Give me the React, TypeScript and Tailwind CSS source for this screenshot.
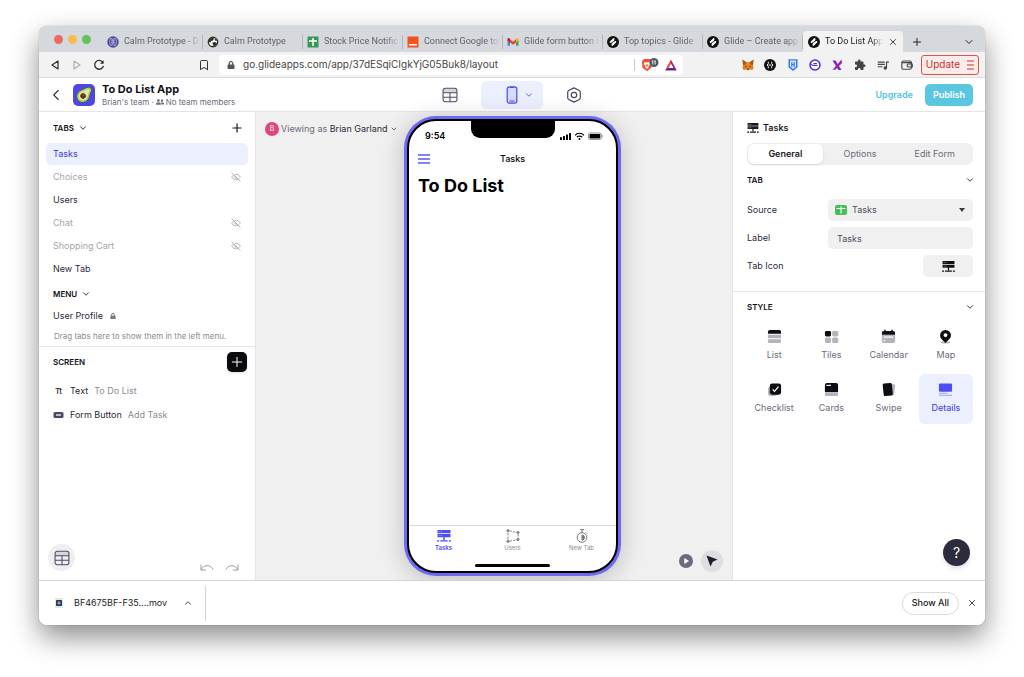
import React, { useState } from "react";
import { Bookmark, ChevronDown, ChevronLeft, ChevronUp, EyeOff, Plus, X } from "lucide-react";
import { FaLock, FaUserFriends } from "react-icons/fa";
import { MdExtension, MdQueueMusic } from "react-icons/md";

interface IconProps {
  className?: string;
}

/* ---------- favicons ---------- */

const GlideLogo = () => (
  <svg viewBox="0 0 24 24" className="size-3 shrink-0">
    <circle cx="12" cy="12" r="12" fill="#111" />
    <path d="M12.500 4.500 5.800 11.200a1.600 1.600 0 0 0 1.100 2.700H10l4.800-5.200V5.500c0-1.300-1.400-1.900-2.300-1z" fill="#fff" />
    <path d="m11.500 19.500 6.700-6.700a1.600 1.600 0 0 0-1.100-2.700H14l-4.800 5.200v3.200c0 1.300 1.400 1.900 2.300 1z" fill="#fff" />
    <path d="m8 14.500 8-5" stroke="#111" strokeWidth="1.500" />
  </svg>
);

const CalmLogo = () => (
  <svg viewBox="0 0 24 24" className="size-3 shrink-0">
    <circle cx="12" cy="12" r="11.500" fill="#4c4a94" />
    <path d="M6 5h4v14H7c-2-3-2-10-1-14zM14 5h4c1 4 1 11-1 14h-3z" fill="none" stroke="#b9aee0" strokeWidth="1.600" />
    <path d="M9 9h6M9 13h6M12 5v14" stroke="#b9aee0" strokeWidth="1.300" />
  </svg>
);

const GlobeLogo = () => (
  <svg viewBox="0 0 24 24" className="size-3 shrink-0">
    <circle cx="12" cy="12" r="9.500" fill="#f4f4f4" stroke="#333" strokeWidth="2.600" />
    <path d="M3 10c1-4 4-7 8-7l3 2-2 4-4 1-1 3-4-1zM11 13l5-1 4 2c0 3-3 6-6 7l-2-3zM15 5l4 2 1 3-4-1z" fill="#333" />
  </svg>
);

const SheetLogo = () => (
  <svg viewBox="0 0 24 24" className="size-3 shrink-0">
    <rect x="1" y="1" width="22" height="22" rx="1" fill="#34985a" />
    <path d="M12 4v16M4 10h16" stroke="#fff" strokeWidth="3" />
  </svg>
);

const ZapierLogo = () => (
  <svg viewBox="0 0 24 24" className="size-3 shrink-0">
    <rect x="1" y="1" width="22" height="22" fill="#f4511e" />
    <path d="M4 16h16v3H4z" fill="#fff" />
  </svg>
);

const GmailLogo = () => (
  <svg viewBox="0 0 24 24" className="size-3 shrink-0">
    <path d="M1 7v12.500h5V10z" fill="#4285f4" />
    <path d="M18 10v9.500h5V7z" fill="#34a853" />
    <path d="m6 6.500 6 5 6-5V13l-6 4.700L6 13z" fill="#ea4335" />
    <path d="M1 7c0-3 2.500-3.500 4.200-2.200L6 5.500V13L1 9z" fill="#c5221f" />
    <path d="M23 7c0-3-2.500-3.500-4.200-2.200l-.8.700V13l5-4z" fill="#fbbc04" />
  </svg>
);

/* ---------- toolbar icons ---------- */

const BackIcon = ({ className }: IconProps) => (
  <svg viewBox="0 0 12 12" className={className} fill="none" stroke="currentColor" strokeWidth="1.200" strokeLinejoin="round">
    <path d="M9 2v8L3 6z" />
  </svg>
);

const ReloadIcon = () => (
  <svg viewBox="0 0 12 12" className="size-3" fill="none" stroke="#2b2b2b" strokeWidth="1.300">
    <path d="M9.800 3.400A4.400 4.400 0 1 0 10.400 6.800" />
    <path d="M10.600 1.200v3.600H7z" fill="#2b2b2b" stroke="none" />
  </svg>
);

const BraveIcon = () => (
  <svg viewBox="0 0 18 14" className="h-[14px] w-[18px]">
    <path d="M3 1h6l2 2-.4 6.500L6 13.300 1.400 9.500 1 3z" fill="#f0512a" />
    <path d="M3.600 4 6 4.600 8.400 4l.9 2-1.800 2 .2 1.300L6 11 4.300 9.300 4.500 8l-1.800-2z" fill="#fff" />
    <path d="M4.600 6.500h2.800L6 9z" fill="#f0512a" />
    <circle cx="13" cy="4.500" r="4.500" fill="#4d5964" />
    <path d="m10.800 3.400 1-.7v3.800M13.200 3.400l1-.7v3.800" stroke="#fff" strokeWidth=".9" fill="none" />
  </svg>
);

const BatIcon = () => (
  <svg viewBox="0 0 12 12" className="size-3">
    <path d="M6 .8.300 11.200h11.400z" fill="#8a2a86" />
    <path d="M6 .8.300 11.200 3 9.500 6 4.500z" fill="#ff4724" />
    <path d="M6 4.600 3.400 9.300h5.200z" fill="#fff" />
    <path d="M.3 11.200h11.400L8.600 9.300H3.400z" fill="#5a1f8a" />
  </svg>
);

const FoxIcon = () => (
  <svg viewBox="0 0 12 12" className="size-3">
    <path d="m.5.800 4 2.400h3l4-2.400L11 6l.6 3-1.200 2-2.600-.6-1 .8H5.200l-1-.8-2.600.6L.4 9 1 6z" fill="#e8821e" />
    <path d="M.5.800 4.500 3.200 3 5.800 1 6zM11.500.800l-4 2.400L9 5.800l2 .2z" fill="#a9541b" />
    <path d="M3 6.600 5 8l-1.500.300zM9 6.600 7 8l1.500.300zM5 9.600h2l-.4 1H5.400z" fill="#2b2b3a" />
  </svg>
);

const HoneyIcon = () => (
  <svg viewBox="0 0 12 12" className="size-3">
    <circle cx="6" cy="6" r="6" fill="#111" />
    <path d="M4.300 2.700v2L3 6l1.300 1.300v2M7.700 2.700v2L9 6 7.700 7.300v2M4.500 6h3" stroke="#e8e8e8" strokeWidth="1" fill="none" />
  </svg>
);

const ShieldIcon = () => (
  <svg viewBox="0 0 12 12" className="size-3">
    <path d="M1.500.300h9v8L6 11.900 1.500 8.300z" fill="#2f7cf0" />
    <path d="M3 1.600h6v5.800L6 9.900 3 7.400z" fill="#dceafe" />
    <path d="M4.800 3v5M7.200 3v5M4.800 5.500h2.400" stroke="#2f7cf0" strokeWidth="1.200" />
  </svg>
);

const PocketIcon = () => (
  <svg viewBox="0 0 12 12" className="size-3">
    <circle cx="6" cy="6" r="5" fill="#fff" stroke="#4a2fd8" strokeWidth="1.500" />
    <path d="M1 4.500c1.500 1.800 2.500 2 4 2h3.500M4.500 4.600h3.300" stroke="#4a2fd8" strokeWidth="1.100" fill="none" />
  </svg>
);

const XenonIcon = () => (
  <svg viewBox="0 0 12 12" className="size-3">
    <path d="M1.500 1.500h3l6 9.500h-3z" fill="#6d28d9" />
    <path d="M10.500.500 6.800 5 5.500 6.200 1.500 11l3-.6L11 4z" fill="#a21caf" />
  </svg>
);

const WalletIcon = () => (
  <svg viewBox="0 0 12 12" className="size-3" fill="none" stroke="#444" strokeWidth="1.100">
    <rect x=".8" y="2" width="9.600" height="8.200" rx="1.500" />
    <path d="M1 3.600h9.400M11.300 5H7.500a1.400 1.400 0 0 0 0 3h3.800z" />
  </svg>
);

/* ---------- app icons ---------- */

const AvocadoIcon = () => (
  <svg viewBox="0 0 22 22" className="size-[22px]">
    <rect width="22" height="22" rx="5" fill="#4f46e5" />
    <g transform="rotate(42 11 11)">
      <path d="M11 1c2.800 0 3.500 2.800 4.200 5 .7 2.200 2.300 3.500 2.300 6.300a6.500 7 0 0 1-13 0c0-2.800 1.600-4.100 2.300-6.300C7.500 3.800 8.200 1 11 1z" fill="#3f6b2a" />
      <path d="M11 1.700c2.300 0 2.900 2.400 3.600 4.600.7 2.200 2.200 3.500 2.200 6a5.800 6.300 0 0 1-11.600 0c0-2.500 1.500-3.800 2.200-6C8.100 4.100 8.700 1.700 11 1.700z" fill="#a9cc5e" />
      <path d="M11 3.300c1.400 0 1.900 2.100 2.500 3.900.6 1.800 1.900 3 1.900 5.100a4.400 4.800 0 0 1-8.800 0c0-2.100 1.300-3.300 1.900-5.100.6-1.800 1.100-3.900 2.500-3.900z" fill="#dfe9a4" />
      <circle cx="11" cy="12.300" r="2.800" fill="#6b2f1a" />
      <circle cx="10.500" cy="11.500" r="1" fill="#934a2c" />
    </g>
  </svg>
);

const TableIcon = ({ className }: IconProps) => (
  <svg viewBox="0 0 18 18" className={className} fill="none" stroke="#4b4b60" strokeWidth="1.200">
    <path d="M1.500 2h15v4.500h-15z" fill="#d6d6dd" stroke="none" />
    <rect x="1.200" y="1.500" width="15.600" height="15" rx="2.500" />
    <path d="M1.200 6.500h15.600M1.200 11.500h15.600M9 6.500v10" />
  </svg>
);

const PhoneIcon = () => (
  <svg viewBox="0 0 12 18" className="h-[18px] w-3" fill="none" stroke="#4f46e5" strokeWidth="1.200">
    <rect x="1.200" y=".8" width="9.600" height="16.400" rx="2.200" fill="#d5dbfd" />
    <path d="M3.500 15h5M4 1.500h4" />
  </svg>
);

const SettingsIcon = () => (
  <svg viewBox="0 0 16 16" className="size-4" fill="none" stroke="#4b4b60" strokeWidth="1.200" strokeLinejoin="round">
    <path d="m8 .9 5.400 2.600.9 1.400v6.200l-.9 1.400L8 15.100l-5.400-2.600-.9-1.400V4.900l.9-1.400z" />
    <circle cx="8" cy="8" r="2.700" />
  </svg>
);

const RackIcon = ({ className }: IconProps) => (
  <svg viewBox="0 0 14 12" className={className} fill="currentColor">
    <path d="M.5 0h13v3.300H.5zM.5 4h13v3.300H.5zM6.300 7.300h1.400V10H6.300zM0 10.300h2.200v1.300H0zM3.300 10.300h7.400v1.300H3.300zM11.800 10.300H14v1.300h-2.200z" />
    <path d="M1.800 1.700h1M3.800 1.700h1M1.800 5.700h1M3.800 5.700h1" stroke="#fff" strokeWidth=".7" opacity=".8" />
  </svg>
);

const NodesIcon = () => (
  <svg viewBox="0 0 14 14" className="size-[14px]" fill="#8b8b92" stroke="#8b8b92">
    <path d="M2 4v6M3.500 1.800 11 3.500M3.500 12.200l7.500-1.500M12.200 5v4" strokeWidth="1" strokeDasharray="2.500 1" fill="none" />
    <circle cx="2" cy="1.800" r="1.200" />
    <circle cx="12" cy="3.500" r="1.200" />
    <circle cx="2" cy="12.200" r="1.200" />
    <circle cx="12" cy="10.500" r="1.200" />
  </svg>
);

const StopwatchIcon = () => (
  <svg viewBox="0 0 12 14" className="h-[14px] w-3" fill="none" stroke="#77777f" strokeWidth="1">
    <circle cx="6" cy="8.500" r="4.800" />
    <path d="M6 6v5a2.500 2.500 0 0 0 0-5z" fill="#77777f" />
    <path d="M4 .6h4M6 .6v3M10 3.500l1 1" />
  </svg>
);

const SignalIcons = () => (
  <svg viewBox="0 0 44 8" className="h-2 w-11" fill="#000">
    <rect x="0" y="5" width="2" height="3" rx=".5" />
    <rect x="3" y="4" width="2" height="4" rx=".5" />
    <rect x="6" y="2.500" width="2" height="5.500" rx=".5" />
    <rect x="9" y="1" width="2" height="7" rx=".5" />
    <path d="M15 3.300a6 6 0 0 1 9 0M16.800 5.200a3.700 3.700 0 0 1 5.400 0" fill="none" stroke="#000" strokeWidth="1.200" />
    <circle cx="19.500" cy="6.900" r="1" />
    <rect x="28.400" y="1" width="13" height="6.600" rx="2" fill="none" stroke="#777" strokeWidth=".8" />
    <rect x="29.500" y="2" width="10.800" height="4.600" rx="1" />
    <path d="M42.500 3v2.600c.8-.2 1-2.400 0-2.600z" fill="#777" />
  </svg>
);

const UndoIcon = ({ className }: IconProps) => (
  <svg viewBox="0 0 14 8" className={className} fill="none" stroke="#9a9aa5" strokeWidth="1">
    <path d="M1 1.500V7h5M1 7c2.500-5.500 9.500-6 12-.5" />
  </svg>
);

/* ---------- style picker drawings ---------- */

const ListArt = () => (
  <>
    <path d="M3 1h10a2 2 0 0 1 2 2v2H1V3a2 2 0 0 1 2-2z" fill="#0d0d12" />
    <path d="M1 6.200h14v3.600H1zM1 11h14v2a2 2 0 0 1-2 2H3a2 2 0 0 1-2-2z" fill="#b3b3bd" />
  </>
);
const TilesArt = () => (
  <>
    <rect x="1" y="2" width="6.500" height="6" rx="1.500" fill="#0d0d12" />
    <rect x="8.700" y="2" width="6.500" height="6" rx="1.500" fill="#b3b3bd" />
    <rect x="1" y="9" width="6.500" height="6" rx="1.500" fill="#b3b3bd" />
    <rect x="8.700" y="9" width="6.500" height="6" rx="1.500" fill="#b3b3bd" />
  </>
);
const CalendarArt = () => (
  <>
    <path d="M1 6.500h14V13a2 2 0 0 1-2 2H3a2 2 0 0 1-2-2z" fill="#b3b3bd" />
    <path d="M3 2h10a2 2 0 0 1 2 2v2H1V4a2 2 0 0 1 2-2zM3.500.800h1.500V3H3.500zM11 .800h1.500V3H11z" fill="#0d0d12" />
    <path d="M3 8h10v1.300H3zM3 11.500h1.500v1.500H3z" fill="#fff" />
  </>
);
const MapArt = () => (
  <>
    <ellipse cx="8" cy="14.300" rx="5" ry="1.200" fill="#b3b3bd" />
    <path d="M8 1a5.800 5.800 0 0 1 5.800 5.700C13.800 10.500 10 12.500 8 15 6 12.500 2.200 10.500 2.200 6.700A5.800 5.800 0 0 1 8 1z" fill="#0d0d12" />
    <circle cx="8" cy="6.500" r="2.100" fill="#fff" />
  </>
);
const ChecklistArt = () => (
  <>
    <rect x="1" y="5" width="10" height="10" rx="3" fill="#b3b3bd" />
    <rect x="3" y="1.500" width="12" height="12" rx="2.500" fill="#0d0d12" />
    <path d="m6 7.800 2 2.200 4.300-5" fill="none" stroke="#fff" strokeWidth="1.300" />
  </>
);
const CardsArt = () => (
  <>
    <path d="M1 11.800h14V13a2 2 0 0 1-2 2H3a2 2 0 0 1-2-2z" fill="#b3b3bd" />
    <path d="M3 1h10a2 2 0 0 1 2 2v8H1V3a2 2 0 0 1 2-2z" fill="#0d0d12" />
    <path d="M2.500 3h5v1.200h-5z" fill="#fff" />
  </>
);
const SwipeArt = () => (
  <>
    <rect x="6" y="2" width="8.500" height="12" rx="1.500" fill="#b3b3bd" transform="rotate(7 10 8)" />
    <rect x="2.300" y="1.300" width="9.800" height="13.400" rx="1.500" fill="#0d0d12" transform="rotate(-6 7 8)" />
  </>
);
const DetailsArt = () => (
  <>
    <rect x="1" y="1.500" width="14" height="9" rx="1.200" fill="#4b4df0" />
    <path d="M1 11.500h9v1.200H1zM1 13.500h14v1.300H1z" fill="#aab0fa" />
  </>
);

/* ---------- data ---------- */

const browserTabs = [
  { title: "Calm Prototype - D", icon: <CalmLogo /> },
  { title: "Calm Prototype", icon: <GlobeLogo /> },
  { title: "Stock Price Notific", icon: <SheetLogo /> },
  { title: "Connect Google to", icon: <ZapierLogo /> },
  { title: "Glide form button i", icon: <GmailLogo /> },
  { title: "Top topics - Glide", icon: <GlideLogo /> },
  { title: "Glide – Create app", icon: <GlideLogo /> },
];

const appTabs = [
  { name: "Tasks", hidden: false },
  { name: "Choices", hidden: true },
  { name: "Users", hidden: false },
  { name: "Chat", hidden: true },
  { name: "Shopping Cart", hidden: true },
  { name: "New Tab", hidden: false },
];

const panelTabs = ["General", "Options", "Edit Form"];

const styles = [
  { name: "List", art: <ListArt /> },
  { name: "Tiles", art: <TilesArt /> },
  { name: "Calendar", art: <CalendarArt /> },
  { name: "Map", art: <MapArt /> },
  { name: "Checklist", art: <ChecklistArt /> },
  { name: "Cards", art: <CardsArt /> },
  { name: "Swipe", art: <SwipeArt /> },
  { name: "Details", art: <DetailsArt /> },
];

/* ---------- browser chrome ---------- */

const TabStrip = () => (
  <div className="flex h-[26px] items-end bg-[#d5d9dd] font-['Roboto',sans-serif] text-[9px] text-[#5f6265]">
    <div className="flex h-full w-16 shrink-0 items-center gap-[5px] pl-[15px]">
      <span className="size-[9px] rounded-full bg-[#ee6a5f]" />
      <span className="size-[9px] rounded-full bg-[#f5bd4f]" />
      <span className="size-[9px] rounded-full bg-[#61c454]" />
    </div>
    {browserTabs.map((tab, i) => (
      <button key={i} className="flex h-[21px] w-[100px] min-w-0 items-center gap-[5px] pl-1">
        {tab.icon}
        <span className="min-w-0 flex-1 overflow-hidden text-left whitespace-nowrap [mask-image:linear-gradient(to_right,black_80%,transparent)]">
          {tab.title}
        </span>
        <span className="-ml-1 h-[14px] w-px bg-[#b4b7ba]" />
      </button>
    ))}
    <div className="flex h-[21px] w-[100px] min-w-0 items-center gap-[5px] rounded-t bg-[#f2f2f2] px-[5px] text-[#222]">
      <GlideLogo />
      <span className="min-w-0 flex-1 overflow-hidden whitespace-nowrap [mask-image:linear-gradient(to_right,black_80%,transparent)]">
        To Do List App
      </span>
      <button aria-label="Close tab">
        <X className="size-[10px]" />
      </button>
    </div>
    <button aria-label="New tab" className="flex h-[21px] items-center pl-2 text-[#222]">
      <Plus className="size-3" />
    </button>
    <button aria-label="Search tabs" className="ml-auto flex h-[21px] items-center pr-[10px] text-[#222]">
      <ChevronDown className="size-3" />
    </button>
  </div>
);

const AddressBar = () => {
  const [url, setUrl] = useState("go.glideapps.com/app/37dESqiCIgkYjG05Buk8/layout");

  return (
    <div className="flex h-[26px] items-center border-b border-[#dcdcdc] bg-[#f2f2f2] pr-[6px] pl-[10px]">
      <div className="flex w-[170px] shrink-0 items-center gap-[10px]">
        <button aria-label="Back"><BackIcon className="size-3 text-[#2b2b2b]" /></button>
        <button aria-label="Forward"><BackIcon className="size-3 rotate-180 text-[#b0b0b0]" /></button>
        <button aria-label="Reload"><ReloadIcon /></button>
        <button aria-label="Bookmark" className="mr-[9px] ml-auto"><Bookmark className="size-3 text-[#333]" /></button>
      </div>
      <div className="flex h-5 min-w-0 flex-1 items-center gap-[6px] rounded-sm bg-white px-[6px]">
        <FaLock className="mx-[2px] size-2 shrink-0 text-[#555]" />
        <input
          aria-label="Address"
          className="min-w-0 flex-1 text-[10px] text-[#444] outline-none"
          value={url}
          onChange={(event) => setUrl(event.target.value)}
        />
        <span className="h-3 w-px bg-[#c8c8c8]" />
        <BraveIcon />
        <BatIcon />
      </div>
      <div className="mr-2 ml-[59px] flex w-[171px] shrink-0 items-center justify-between">
        <FoxIcon />
        <HoneyIcon />
        <ShieldIcon />
        <PocketIcon />
        <XenonIcon />
        <MdExtension className="size-3 text-[#444]" />
        <MdQueueMusic className="size-[14px] text-[#444]" />
        <WalletIcon />
      </div>
      <button className="flex h-5 items-center gap-[7px] rounded-[3px] border border-[#d9534a] bg-[#fbecec] px-1 text-[10px] text-[#c5352b]">
        Update
        <svg viewBox="0 0 7 10" className="h-[10px] w-[7px]" stroke="currentColor">
          <path d="M0 1h7M0 5h7M0 9h7" />
        </svg>
      </button>
    </div>
  );
};

const DownloadBar = () => (
  <footer className="flex h-[45px] shrink-0 items-center border-t border-[#d4d4d4] bg-white pr-2 pl-4 text-[9px] text-[#222]">
    <svg viewBox="0 0 8 10" className="h-[10px] w-2">
      <rect width="8" height="10" rx="1" fill="#e6e6e6" />
      <rect x="1" y="2" width="6" height="6" rx="1" fill="#333" />
      <circle cx="4" cy="5" r="1.800" fill="#5aa0ec" />
    </svg>
    <span className="ml-[11px]">BF4675BF-F35....mov</span>
    <button aria-label="Download options" className="ml-4">
      <ChevronUp className="size-[10px]" />
    </button>
    <span className="ml-3 h-[35px] w-px bg-[#d4d4d4]" />
    <button className="ml-auto h-[23px] rounded-full border border-[#dadada] px-[9px] font-medium">Show All</button>
    <button aria-label="Close downloads" className="ml-2">
      <X className="size-[10px]" />
    </button>
  </footer>
);

/* ---------- editor ---------- */

const AppHeader = () => (
  <header className="flex h-[34px] shrink-0 items-center border-b border-[#e4e4e8] bg-white pr-3 pl-3">
    <div className="flex flex-1 items-center">
      <button aria-label="Back to apps" className="-ml-1"><ChevronLeft className="size-[18px] text-[#333]" strokeWidth={1.5} /></button>
      <span className="ml-2"><AvocadoIcon /></span>
      <div className="ml-[7px]">
        <h1 className="text-[11px] leading-[14px] font-bold text-[#111118]">To Do List App</h1>
        <p className="flex items-center gap-[2px] text-[8px] leading-3 whitespace-nowrap text-[#6b6b7b]">
          Brian's team · <FaUserFriends className="size-2" /> No team members
        </p>
      </div>
    </div>
    <nav className="flex items-center gap-[23px]">
      <button aria-label="Data"><TableIcon className="size-4" /></button>
      <button aria-label="Layout" className="flex h-7 w-[62px] items-center justify-end gap-[6px] rounded-md bg-[#ebeffe] pr-[9px]">
        <PhoneIcon />
        <ChevronDown className="size-[10px] text-[#4f46e5]" />
      </button>
      <button aria-label="Settings"><SettingsIcon /></button>
    </nav>
    <div className="flex flex-1 items-center justify-end gap-3 text-[9px] font-semibold">
      <a href="#upgrade" className="text-[#52c3de]">Upgrade</a>
      <button className="h-[22px] rounded-[5px] bg-[#5bc6e0] px-2 text-white">Publish</button>
    </div>
  </header>
);

const Sidebar = () => {
  const [selected, setSelected] = useState("Tasks");

  return (
    <aside className="flex w-[217px] shrink-0 flex-col border-r border-[#e4e4e8] bg-white text-[9px] text-[#2a2a3a]">
      <div className="flex h-[31px] items-center justify-between pr-[11px] pl-[14px]">
        <h2 className="flex items-center gap-1 text-[8px] font-semibold text-[#111118]">
          TABS <ChevronDown className="size-[10px]" />
        </h2>
        <button aria-label="Add tab"><Plus className="size-[14px] text-[#111118]" /></button>
      </div>
      <div className="flex flex-col gap-px px-[7px]">
        {appTabs.map((tab) => (
          <button
            key={tab.name}
            onClick={() => setSelected(tab.name)}
            className={
              "flex h-[22px] items-center justify-between rounded-[5px] px-[7px] " +
              (tab.name === selected ? "bg-[#ebeffe] text-[#3b3be8]" : tab.hidden ? "text-[#a4a4ac]" : "")
            }
          >
            {tab.name}
            {tab.hidden && <EyeOff className="size-[10px]" />}
          </button>
        ))}
      </div>
      <h2 className="flex h-[27px] items-center gap-1 pl-[14px] text-[8px] font-semibold text-[#111118]">
        MENU <ChevronDown className="size-[10px]" />
      </h2>
      <p className="flex h-[18px] items-center gap-[7px] pl-[14px]">
        User Profile <FaLock className="size-[6px] text-[#77777f]" />
      </p>
      <p className="flex h-[21px] items-center pl-[15px] text-[8px] text-[#8b8b95]">Drag tabs here to show them in the left menu.</p>

      <div className="flex h-[30px] items-center justify-between border-t border-[#e8e8ec] pr-2 pl-[14px]">
        <h2 className="text-[8px] font-semibold text-[#111118]">SCREEN</h2>
        <button aria-label="Add component" className="flex size-5 items-center justify-center rounded-[5px] bg-[#0a0a0f] text-white shadow">
          <Plus className="size-4" strokeWidth={1.5} />
        </button>
      </div>
      <ul className="pt-[3px]">
        <li className="flex h-6 items-center gap-[6px] pl-[14px]">
          <span className="w-[11px] text-center text-[8px] font-medium">Tt</span>
          Text <span className="text-[#8b8b95]">To Do List</span>
        </li>
        <li className="flex h-6 items-center gap-[6px] pl-[14px]">
          <svg viewBox="0 0 11 6" className="h-[6px] w-[11px]">
            <rect x=".5" width="10" height="6" rx="1.500" fill="#4b4b60" />
            <path d="M3 3h5" stroke="#fff" strokeWidth="1.200" />
          </svg>
          Form Button <span className="text-[#8b8b95]">Add Task</span>
        </li>
      </ul>

      <div className="mt-auto flex items-end pr-4 pb-[9px] pl-[9px]">
        <button aria-label="Open data" className="flex size-[27px] items-center justify-center rounded-full bg-[#efeff1]">
          <TableIcon className="size-4" />
        </button>
        <button aria-label="Undo" className="ml-auto"><UndoIcon className="h-2 w-[14px]" /></button>
        <button aria-label="Redo" className="ml-[11px]"><UndoIcon className="h-2 w-[14px] -scale-x-100" /></button>
      </div>
    </aside>
  );
};

const PhonePreview = () => (
  <div className="w-[217px] shrink-0 rounded-[32px] bg-[#6d69f2] p-[3px] shadow-[0_4px_24px_rgba(0,0,0,0.22)]">
    <div className="relative flex h-full flex-col overflow-hidden rounded-[29px] border-2 border-black bg-white text-black">
      <span className="absolute top-0 left-1/2 h-[17px] w-[84px] -translate-x-1/2 rounded-b-[9px] bg-black" />
      <div className="flex h-[30px] items-center justify-between pr-[12px] pl-4">
        <span className="text-[9px] font-semibold">9:54</span>
        <SignalIcons />
      </div>
      <div className="grid h-4 grid-cols-3 items-center px-[9px]">
        <button aria-label="Menu">
          <svg viewBox="0 0 12 10" className="h-[10px] w-3" stroke="#5b57ee" strokeWidth="1.300">
            <path d="M0 1h12M0 5h12M0 9h12" />
          </svg>
        </button>
        <span className="text-center text-[9px] font-medium">Tasks</span>
      </div>
      <h2 className="px-[9px] pt-[7px] text-[18px] leading-6 font-bold">To Do List</h2>
      <nav className="mt-auto grid h-[39px] shrink-0 grid-cols-3 border-t border-[#d8d8dc] pt-[3px] text-[6px] text-[#8b8b92]">
        <a href="#tasks" className="flex flex-col items-center font-semibold text-[#4b4df0]">
          <span className="flex h-[14px] items-center"><RackIcon className="h-3 w-[14px]" /></span>Tasks
        </a>
        <a href="#users" className="flex flex-col items-center"><NodesIcon />Users</a>
        <a href="#new-tab" className="flex flex-col items-center"><StopwatchIcon />New Tab</a>
      </nav>
      <span className="mx-auto mb-1 h-[3px] w-[75px] shrink-0 rounded-full bg-black" />
    </div>
  </div>
);

const Canvas = () => (
  <main className="flex min-w-0 flex-1 bg-[#f0f0f0] pt-1 pb-1">
    <div className="min-w-0 flex-4">
      <button className="ml-[9px] flex h-[26px] items-center gap-[2px] text-[9px] whitespace-nowrap text-[#6b6b7b]">
        <span className="flex size-[14px] items-center justify-center rounded-full bg-[#e0457b] text-[7px] text-white">B</span>
        <span>Viewing as <span className="text-[#2a2a3a]">Brian Garland</span></span>
        <ChevronDown className="size-2 text-[#2a2a3a]" />
      </button>
    </div>
    <PhonePreview />
    <div className="flex min-w-0 flex-3 items-end justify-end gap-2 pb-1">
      <button aria-label="Play" className="flex h-[22px] items-center">
        <svg viewBox="0 0 14 14" className="size-[14px]">
          <circle cx="7" cy="7" r="7" fill="#6b6b7b" />
          <path d="M5.300 4v6L10 7z" fill="#fff" />
        </svg>
      </button>
      <button aria-label="Select" className="mr-[9px] flex size-[22px] items-center justify-center rounded-full bg-[#dedee0]">
        <svg viewBox="0 0 12 12" className="size-3">
          <path d="M.5.500 11.500 4.500 6.800 6.800 4.500 11.500z" fill="#1e1e2a" />
        </svg>
      </button>
    </div>
  </main>
);

const Inspector = () => {
  const [panel, setPanel] = useState("General");
  const [label, setLabel] = useState("Tasks");
  const [layout, setLayout] = useState("Details");

  return (
    <aside className="flex w-[253px] shrink-0 flex-col border-l border-[#e4e4e8] bg-white text-[9px] text-[#2a2a3a]">
      <div className="flex flex-col pr-3 pl-[14px]">
        <h2 className="flex h-[31px] items-center gap-1 font-semibold text-[#1a1a26]">
          <RackIcon className="h-[10px] w-3" /> Tasks
        </h2>
        <div className="flex h-[22px] rounded-[7px] bg-[#f0f0f0] p-px text-[#6b6b7b]">
          {panelTabs.map((name) => (
            <button
              key={name}
              onClick={() => setPanel(name)}
              className={"flex-1 rounded-md " + (name === panel ? "bg-white font-semibold text-[#1a1a26] shadow" : "")}
            >
              {name}
            </button>
          ))}
        </div>
        <h3 className="mb-1 flex h-[30px] items-center justify-between text-[8px] font-semibold text-[#111118]">
          TAB <ChevronDown className="-mr-[2px] size-[10px]" />
        </h3>
        <div className="flex flex-col gap-[6px]">
          <div className="flex items-center">
            <label htmlFor="source" className="w-[81px]">Source</label>
            <div className="relative flex-1">
              <select id="source" className="block h-[22px] w-full appearance-none rounded-[5px] bg-[#f0f0f0] pl-6 text-[#4b4b60] outline-none">
                <option>Tasks</option>
              </select>
              <svg viewBox="0 0 12 10" className="pointer-events-none absolute top-[6px] left-[7px] h-[10px] w-3">
                <rect width="12" height="10" rx="2" fill="#45bf55" />
                <path d="M1.500 3.500h9M6 1.500v7" stroke="#fff" strokeWidth="1.100" />
              </svg>
              <svg viewBox="0 0 6 4" className="pointer-events-none absolute top-[9px] right-2 h-1 w-[6px]">
                <path d="M0 0h6L3 4z" fill="#3a3a4a" />
              </svg>
            </div>
          </div>
          <div className="flex items-center">
            <label htmlFor="label" className="w-[81px]">Label</label>
            <input
              id="label"
              className="h-[22px] min-w-0 flex-1 rounded-[5px] bg-[#f0f0f0] px-[9px] text-[#4b4b60] outline-none"
              value={label}
              onChange={(event) => setLabel(event.target.value)}
            />
          </div>
          <div className="flex items-center justify-between">
            <label htmlFor="tab-icon">Tab Icon</label>
            <button id="tab-icon" className="flex h-[22px] w-[50px] items-center justify-center rounded-[5px] bg-[#f0f0f0] text-[#111]">
              <RackIcon className="h-[11px] w-[13px]" />
            </button>
          </div>
        </div>
      </div>
      <div className="mt-[14px] flex flex-col border-t border-[#e8e8ec] pr-3 pl-[14px]">
        <h3 className="flex h-[29px] items-center justify-between text-[8px] font-semibold text-[#111118]">
          STYLE <ChevronDown className="-mr-[2px] size-[10px]" />
        </h3>
        <div className="grid grid-cols-4 gap-[3px]">
          {styles.map((style) => (
            <button
              key={style.name}
              onClick={() => setLayout(style.name)}
              className={
                "flex h-[50px] flex-col items-center justify-center gap-1 rounded-md pb-[2px] " +
                (style.name === layout ? "bg-[#ebeffe] text-[#3b3be8]" : "text-[#6b6b7b]")
              }
            >
              <svg viewBox="0 0 16 16" className="size-[15px]">{style.art}</svg>
              {style.name}
            </button>
          ))}
        </div>
      </div>
      <button className="mt-auto mr-[15px] mb-[14px] size-[27px] self-end rounded-full bg-[#2c2c3c] text-[14px] text-white shadow-md">?</button>
    </aside>
  );
};

const App = () => {
  return (
    <div className="flex min-h-screen flex-col bg-white px-[39px] pt-[26px] pb-[52px] font-['Inter',sans-serif]">
      <div className="flex flex-1 flex-col overflow-hidden rounded-lg bg-white shadow-[0_0_1px_rgba(0,0,0,0.5),0_12px_28px_rgba(0,0,0,0.45)]">
        <TabStrip />
        <AddressBar />
        <AppHeader />
        <div className="flex flex-1">
          <Sidebar />
          <Canvas />
          <Inspector />
        </div>
        <DownloadBar />
      </div>
    </div>
  );
};

export default App;
